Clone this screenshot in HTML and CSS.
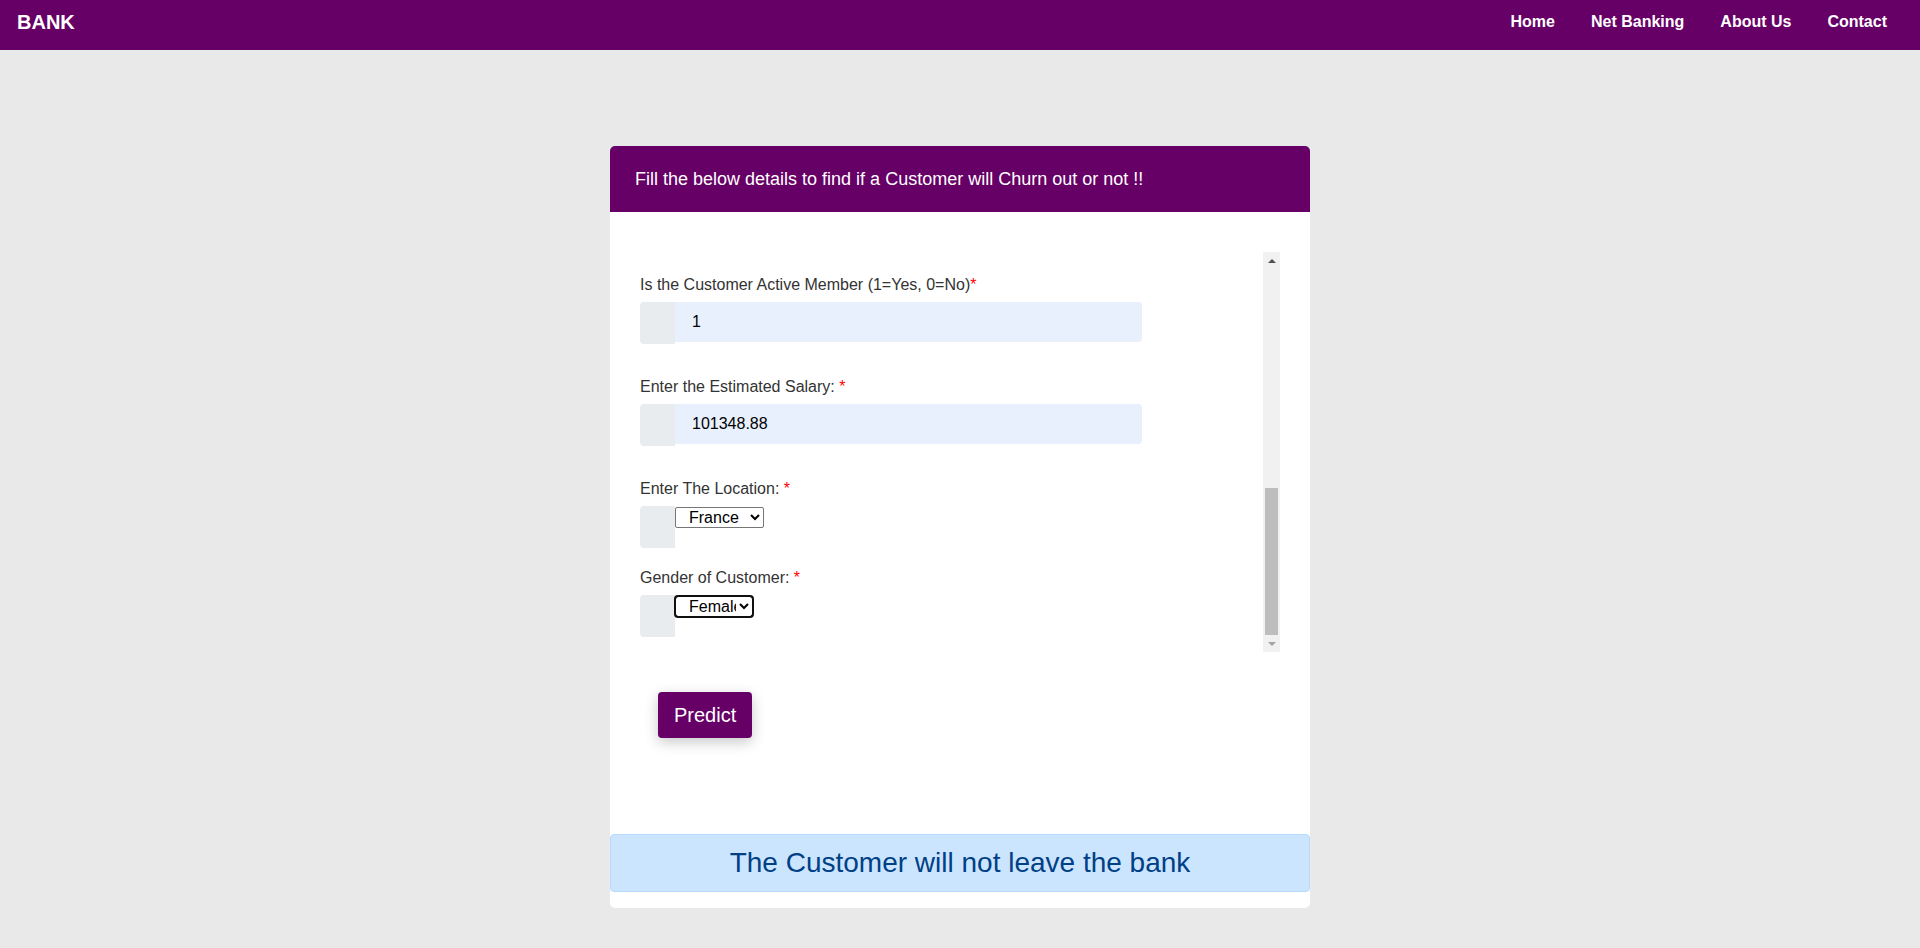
FILE: index.html
```html
<!DOCTYPE html>
<html lang="en">
<head>
<meta charset="utf-8">
<title>BANK - Customer Churn Prediction</title>
<link rel="stylesheet" href="styles.css">
</head>
<body>
<header class="navbar">
  <a class="brand" href="#">BANK</a>
  <nav class="nav-links">
    <a href="#">Home</a>
    <a href="#">Net Banking</a>
    <a href="#">About Us</a>
    <a href="#">Contact</a>
  </nav>
</header>
<main class="page">
  <section class="card">
    <div class="card-header">Fill the below details to find if a Customer will Churn out or not !!</div>
    <div class="card-body">
      <form class="form">
        <div class="scroll-area">
          <div class="viewport">
            <div class="fields">
              <div class="field">
                <label>Is the Customer Active Member (1=Yes, 0=No)<span class="req">*</span></label>
                <div class="input-group"><span class="prefix"></span><input class="input" type="text" value="1"></div>
              </div>
              <div class="field">
                <label>Enter the Estimated Salary: <span class="req">*</span></label>
                <div class="input-group"><span class="prefix"></span><input class="input" type="text" value="101348.88"></div>
              </div>
              <div class="field field-select">
                <label>Enter The Location: <span class="req">*</span></label>
                <div class="input-group"><span class="prefix"></span>
                  <select class="select select-location">
                    <option selected>France</option>
                    <option>Germany</option>
                    <option>Spain</option>
                  </select>
                </div>
              </div>
              <div class="field field-select">
                <label>Gender of Customer: <span class="req">*</span></label>
                <div class="input-group"><span class="prefix"></span>
                  <select class="select select-gender select-focused">
                    <option selected>Female</option>
                    <option>Male</option>
                  </select>
                </div>
              </div>
            </div>
          </div>
          <div class="scrollbar" aria-hidden="true">
            <span class="sb-button">
              <svg width="8" height="4" viewBox="0 0 8 4"><path d="M0 4 L4 0 L8 4 Z" fill="#505050"/></svg>
            </span>
            <span class="sb-track"><span class="sb-thumb"></span></span>
            <span class="sb-button">
              <svg width="8" height="4" viewBox="0 0 8 4"><path d="M0 0 L4 4 L8 0 Z" fill="#a3a3a3"/></svg>
            </span>
          </div>
        </div>
        <div class="actions">
          <button class="btn-predict" type="button">Predict</button>
        </div>
      </form>
      <div class="result">The Customer will not leave the bank</div>
    </div>
  </section>
</main>
</body>
</html>
```
FILE: styles.css
```css
* {
  box-sizing: border-box;
}

html,
body {
  margin: 0;
  padding: 0;
}

body {
  background: #e9e9e9;
  font-family: "Liberation Sans", Arial, sans-serif;
}

/* Navbar */
.navbar {
  display: flex;
  justify-content: space-between;
  align-items: flex-start;
  height: 50px;
  background: #660066;
  padding: 0 15px 0 17px;
}

.brand {
  margin-top: 10px;
  font-size: 20px;
  line-height: 24px;
  font-weight: bold;
  color: #fff;
  text-decoration: none;
}

.nav-links {
  display: flex;
  margin-top: 12px;
}

.nav-links a {
  padding: 0 18px;
  font-size: 16px;
  line-height: 19px;
  font-weight: bold;
  color: #fff;
  text-decoration: none;
}

/* Card */
.page {
  padding-top: 96px;
}

.card {
  width: 700px;
  margin: 0 auto;
  background: #fff;
  border-radius: 5px;
  overflow: hidden;
}

.card-header {
  background: #660066;
  color: #fff;
  font-size: 18px;
  line-height: 20px;
  padding: 23px 25px;
}

.card-body {
  padding: 40px 0 16px;
}

/* Scrollable form area (shown scrolled to its end) */
.scroll-area {
  display: flex;
  margin: 0 30px;
  height: 400px;
}

.viewport {
  flex: 1;
  display: flex;
  flex-direction: column;
  justify-content: flex-end;
  overflow: hidden;
}

.fields {
  flex: none;
}

.field {
  margin-bottom: 34px;
}

.field-select {
  margin-bottom: 21px;
}

.field:last-child {
  margin-bottom: 15px;
}

.field label {
  display: block;
  font-size: 16px;
  line-height: 18px;
  color: #333;
  margin-bottom: 8px;
}

.req {
  color: #ff0000;
}

.input-group {
  display: flex;
  align-items: flex-start;
}

.prefix {
  flex: none;
  width: 35px;
  height: 42px;
  background: #e9ecef;
  border-radius: 4px 0 0 4px;
}

.input {
  width: 467px;
  height: 40px;
  border: 0;
  background: #e8f0fe;
  border-radius: 0 4px 4px 0;
  padding: 0 0 0 17px;
  font: 16px "Liberation Sans", Arial, sans-serif;
  color: #000;
  outline: none;
}

.select {
  margin-top: 1px;
  height: 21px;
  padding: 0 0 0 9px;
  font: 16px "Liberation Sans", Arial, sans-serif;
  color: #000;
  background: #fff;
  border: 1px solid #767676;
  border-radius: 2px;
}

.select-location {
  width: 89px;
}

.select-gender {
  width: 78px;
}

.select-focused {
  border-color: #101010;
  outline: 2px solid #101010;
  outline-offset: -1px;
  border-radius: 3px;
}

/* Scrollbar */
.scrollbar {
  flex: none;
  width: 17px;
  display: flex;
  flex-direction: column;
  background: #f1f1f1;
}

.sb-button {
  flex: none;
  height: 17px;
  display: flex;
  align-items: center;
  justify-content: center;
}

.sb-track {
  flex: 1;
  display: flex;
  flex-direction: column;
  justify-content: flex-end;
  padding: 0 2px;
}

.sb-thumb {
  height: 147px;
  background: #bdbdbd;
}

/* Button */
.actions {
  padding: 40px 0 0 48px;
}

.btn-predict {
  display: block;
  background: #660066;
  color: #fff;
  border: 0;
  border-radius: 4px;
  font: 20px/23px "Liberation Sans", Arial, sans-serif;
  padding: 11.5px 16px;
  box-shadow: 0 4px 14px rgba(0, 0, 0, 0.22);
  cursor: pointer;
}

/* Result */
.result {
  margin-top: 96px;
  background: #cce5ff;
  border: 1px solid #b8daff;
  border-radius: 4px;
  color: #004085;
  font-size: 28px;
  line-height: 34px;
  padding: 11px 20px;
  text-align: center;
}
```
